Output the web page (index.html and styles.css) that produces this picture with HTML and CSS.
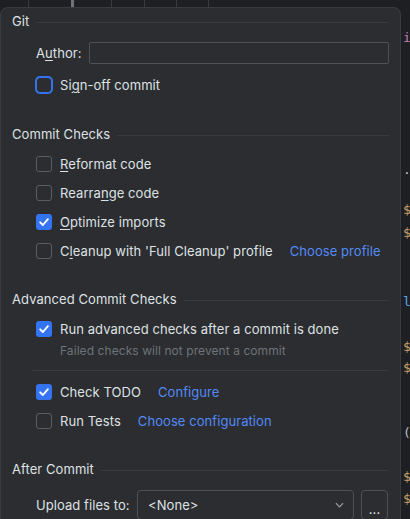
FILE: index.html
```html
<!DOCTYPE html>
<html lang="en">
<head>
    <meta charset="UTF-8">
    <title>Commit Options</title>
    <link rel="stylesheet" href="styles.css">
</head>
<body>
    <div class="editor-top">
        <span class="cell w28"></span>
        <span class="caret"></span>
        <span class="cell w40"></span>
        <span class="cell w33"></span>
        <span class="cell w32"></span>
        <span class="cell w32"></span>
    </div>

    <div class="workspace">
        <div class="popup">
            <section class="group">
                <div class="group-title">Git</div>
                <div class="field-row">
                    <label class="field-label author-label">A<u>u</u>thor:</label>
                    <div class="text-input"></div>
                </div>
                <div class="check-row signoff">
                    <span class="checkbox focused"></span>
                    <span>Si<u>g</u>n-off commit</span>
                </div>
            </section>

            <section class="group">
                <div class="group-title">Commit Checks</div>
                <div class="rows">
                    <div class="check-row">
                        <span class="checkbox"></span>
                        <span><u>R</u>eformat code</span>
                    </div>
                    <div class="check-row">
                        <span class="checkbox"></span>
                        <span>Rearra<u>n</u>ge code</span>
                    </div>
                    <div class="check-row">
                        <span class="checkbox checked">
                            <svg viewBox="0 0 16 16"><path d="M4.2 8.3 L6.9 11 L11.9 5.2"/></svg>
                        </span>
                        <span><u>O</u>ptimize imports</span>
                    </div>
                    <div class="check-row">
                        <span class="checkbox"></span>
                        <span>C<u>l</u>eanup with 'Full Cleanup' profile</span>
                        <a class="link">Choose profile</a>
                    </div>
                </div>
            </section>

            <section class="group">
                <div class="group-title">Advanced Commit Checks</div>
                <div class="rows">
                    <div class="check-row">
                        <span class="checkbox checked">
                            <svg viewBox="0 0 16 16"><path d="M4.2 8.3 L6.9 11 L11.9 5.2"/></svg>
                        </span>
                        <span>Run advanced checks after a commit is done</span>
                    </div>
                    <div class="hint">Failed checks will not prevent a commit</div>
                    <div class="separator"></div>
                    <div class="check-row">
                        <span class="checkbox checked">
                            <svg viewBox="0 0 16 16"><path d="M4.2 8.3 L6.9 11 L11.9 5.2"/></svg>
                        </span>
                        <span>Check TODO</span>
                        <a class="link">Configure</a>
                    </div>
                    <div class="check-row">
                        <span class="checkbox"></span>
                        <span>Run Tests</span>
                        <a class="link">Choose configuration</a>
                    </div>
                </div>
            </section>

            <section class="group">
                <div class="group-title">After Commit</div>
                <div class="field-row upload-row">
                    <label class="field-label upload-label">Upload files to:</label>
                    <div class="combo">
                        <span>&lt;None&gt;</span>
                        <svg class="chevron" viewBox="0 0 10 6"><path d="M1 1 L5 5 L9 1"/></svg>
                    </div>
                    <div class="browse-btn">...</div>
                </div>
            </section>
        </div>

        <div class="gutter">
            <div class="code kw g1">i</div>
            <div class="code plain g2">.</div>
            <div class="code var g3">$</div>
            <div class="code var g4">$</div>
            <div class="code fn g5">l</div>
            <div class="code var g6">$</div>
            <div class="code var g7">$</div>
            <div class="code plain g8">(</div>
            <div class="code var g9">$</div>
            <div class="code var g10">$</div>
        </div>
    </div>
</body>
</html>
```

FILE: styles.css
```css
:root {
    --editor-bg: #1e1f22;
    --panel-bg: #2b2d30;
    --border: #393b40;
    --control-border: #4e5157;
    --text: #dfe1e5;
    --muted: #6f737a;
    --accent: #3574f0;
    --link: #548af7;
}

* {
    box-sizing: border-box;
}

body {
    margin: 0;
    height: 519px;
    overflow: hidden;
    background-color: var(--editor-bg);
    color: var(--text);
    font-family: Inter, "Noto Sans", sans-serif;
    font-size: 13px;
    letter-spacing: 0.07px;
}

u {
    text-underline-offset: 2px;
}

/* editor strip above the popup */
.editor-top {
    display: flex;
    height: 7px;
}

.cell {
    height: 100%;
    border-right: 1px solid var(--border);
}

.w28 { width: 29px; }
.w40 { width: 38px; }
.w33 { width: 33px; }
.w32 { width: 32px; }

.caret {
    width: 3px;
    height: 100%;
    margin-left: 42px;
    background-color: #6f737a;
}

.workspace {
    display: flex;
    height: 512px;
}

.popup {
    width: 401px;
    flex-shrink: 0;
    background-color: var(--panel-bg);
    border: 1px solid var(--border);
    border-bottom: none;
    border-radius: 8px 8px 0 0;
    padding: 4px 11px 0 11px;
}

.group + .group {
    margin-top: 25px;
}

.group:nth-child(2) {
    margin-top: 28px;
}

.group-title {
    display: flex;
    align-items: center;
    gap: 7px;
    height: 18px;
    line-height: 18px;
}

.group-title::after {
    content: "";
    flex: 1;
    height: 1px;
    margin-top: 2px;
    background-color: var(--border);
}

.rows {
    margin-top: 6px;
}

.field-row {
    display: flex;
    align-items: center;
    height: 24px;
    margin-top: 11px;
    padding-left: 24px;
}

.field-label {
    flex-shrink: 0;
}

.author-label {
    width: 53px;
}

.text-input {
    flex: 1;
    height: 22px;
    border: 1px solid var(--control-border);
    border-radius: 2px;
}

.check-row {
    display: flex;
    align-items: center;
    gap: 8px;
    height: 29px;
    padding-left: 24px;
}

.check-row.signoff {
    height: 24px;
    margin-top: 8px;
}

.checkbox {
    width: 16px;
    height: 16px;
    flex-shrink: 0;
    border: 1px solid #5a5d63;
    border-radius: 3px;
    background-color: #2b2d30;
}

.checkbox.focused {
    border-color: var(--accent);
    box-shadow: 0 0 0 1px var(--accent);
    border-radius: 4px;
}

.checkbox.checked {
    border: none;
    background-color: var(--accent);
}

.checkbox svg {
    display: block;
    width: 16px;
    height: 16px;
}

.checkbox path {
    fill: none;
    stroke: #ffffff;
    stroke-width: 1.9;
    stroke-linecap: round;
    stroke-linejoin: round;
}

.link {
    margin-left: 9px;
    color: var(--link);
    cursor: pointer;
}

.hint {
    height: 16px;
    line-height: 16px;
    padding-left: 48px;
    font-size: 12px;
    color: var(--muted);
}

.separator {
    height: 1px;
    margin: 11px 0 6px 21px;
    background-color: var(--border);
}

.upload-row {
    height: 30px;
    margin-top: 12px;
}

.upload-label {
    width: 101px;
}

.combo {
    display: flex;
    align-items: center;
    justify-content: space-between;
    width: 217px;
    height: 30px;
    padding: 0 9px 0 10px;
    border: 1px solid var(--control-border);
    border-radius: 4px;
}

.chevron {
    width: 9px;
    height: 6px;
}

.chevron path {
    fill: none;
    stroke: #9da0a8;
    stroke-width: 1.3;
}

.browse-btn {
    width: 27px;
    height: 30px;
    margin-left: 7px;
    border: 1px solid var(--control-border);
    border-radius: 4px;
    text-align: center;
    line-height: 30px;
    padding-top: 3px;
    color: var(--text);
}

/* editor code peeking out at the right */
.gutter {
    flex: 1;
    overflow: hidden;
    padding-left: 2px;
    font-family: "DejaVu Sans Mono", monospace;
    font-size: 13px;
}

.code {
    height: 18px;
    line-height: 18px;
    white-space: nowrap;
}

.kw { color: #c77dbb; }
.plain { color: #bcbec4; }
.var { color: #c9a26d; }
.fn { color: #56a8f5; }

.g1 { margin-top: 22px; }
.g2 { margin-top: 114px; }
.g3 { margin-top: 22px; }
.g4 { margin-top: 5px; }
.g5 { margin-top: 51px; }
.g6 { margin-top: 27px; }
.g7 { margin-top: 3px; }
.g8 { margin-top: 47px; }
.g9 { margin-top: 26px; }
.g10 { margin-top: 4px; }
```
